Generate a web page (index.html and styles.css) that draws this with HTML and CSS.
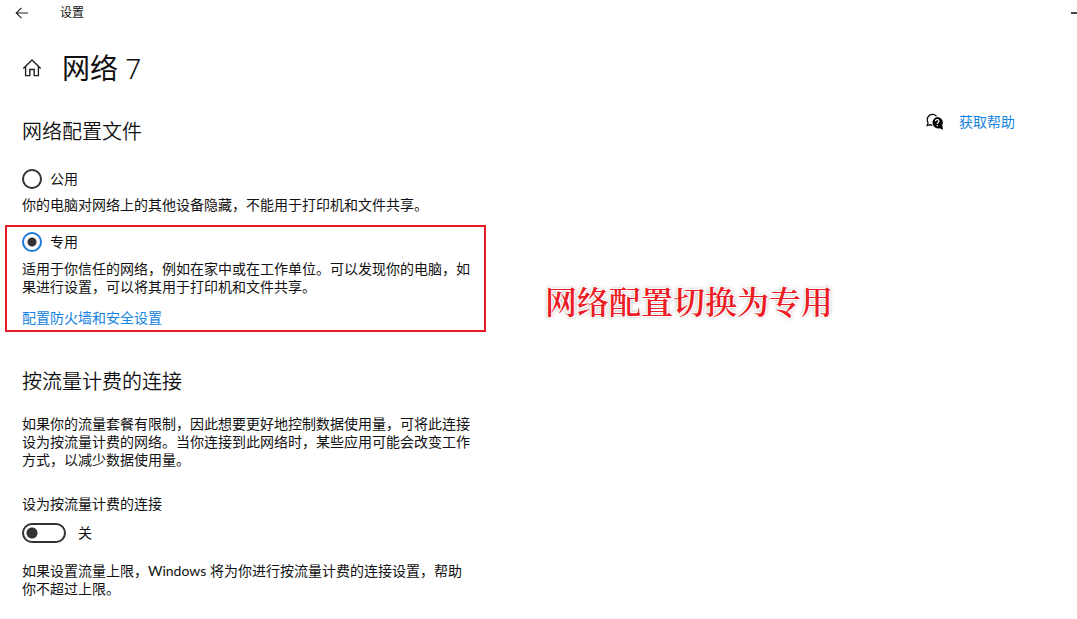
FILE: index.html
```html
<!DOCTYPE html>
<html lang="zh-CN">
<head>
<meta charset="utf-8">
<title>设置</title>
<link rel="stylesheet" href="styles.css">
</head>
<body>
<header class="titlebar">
  <button class="back" type="button" aria-label="返回">
    <svg width="14" height="12" viewBox="0 0 14 12" fill="none" stroke="#222" stroke-width="1.1"><path d="M13 6H1M6.5 .8L1.2 6l5.3 5.2"/></svg>
  </button>
  <span class="app-name">设置</span>
  <button class="minimize" type="button" aria-label="最小化"></button>
</header>
<div class="page-title">
  <svg class="home" width="20" height="20" viewBox="0 0 20 20" fill="none" stroke="#222" stroke-width="1.4"><path d="M1.3 10.4L10 2l8.7 8.4M3.6 8.5v9.1h4.2v-6.1h4.4v6.1h4.2V8.5"/></svg>
  <h1>网络 <span class="thin">7</span></h1>
</div>
<div class="content">
  <main class="settings">
    <section class="profile">
      <h2>网络配置文件</h2>
      <label class="option"><input type="radio" name="profile">公用</label>
      <p class="public-note">你的电脑对网络上的其他设备隐藏，不能用于打印机和文件共享。</p>
      <div class="highlight">
        <label class="option"><input type="radio" name="profile" checked>专用</label>
        <p class="private-note">适用于你信任的网络，例如在家中或在工作单位。可以发现你的电脑，如果进行设置，可以将其用于打印机和文件共享。</p>
        <a class="link" href="#">配置防火墙和安全设置</a>
      </div>
    </section>
    <section class="metered">
      <h2>按流量计费的连接</h2>
      <p class="metered-note">如果你的流量套餐有限制，因此想要更好地控制数据使用量，可将此连接设为按流量计费的网络。当你连接到此网络时，某些应用可能会改变工作方式，以减少数据使用量。</p>
      <label class="toggle-label" for="metered">设为按流量计费的连接</label>
      <div class="toggle-row"><input class="toggle" id="metered" type="checkbox" role="switch"><span>关</span></div>
      <p>如果设置流量上限，Windows 将为你进行按流量计费的连接设置，帮助你不超过上限。</p>
    </section>
  </main>
  <aside class="side">
    <a class="help" href="#">
      <svg width="18" height="18" viewBox="0 0 18 18"><path d="M6.6 1.4a5.3 5.3 0 0 1 5.2 5.3A5.3 5.3 0 0 1 4.2 11.6L1.2 12.6l.9-3A5.3 5.3 0 0 1 6.6 1.4z" fill="#fff" stroke="#000" stroke-width="1.2"/><path d="M11.2 3.9a5.7 5.7 0 0 1 5 8.3l.9 4.5-3.6-1.4A5.8 5.8 0 1 1 11.2 3.9z" stroke="#fff" stroke-width="1.6" paint-order="stroke"/><path d="M9.5 8.2c0-2.2 3.4-2.1 3.4-.1 0 1.4-1.7 1.4-1.7 2.9M11.2 12v1.3" fill="none" stroke="#fff" stroke-width="1.2"/></svg>
      <span>获取帮助</span>
    </a>
    <p class="callout">网络配置切换为专用</p>
  </aside>
</div>
</body>
</html>
```
FILE: styles.css
```css
* { box-sizing: border-box; }
body {
  margin: 0;
  background: #fff;
  color: #111;
  font: 14px/18px Lato, "Noto Sans CJK SC", sans-serif;
}
h1, h2, p { margin: 0; font-weight: 400; }
button { border: 0; padding: 0; background: none; }
input { appearance: none; margin: 0; flex: none; }
a { text-decoration: none; color: #1583e0; }

.titlebar { display: flex; align-items: center; height: 25px; padding-left: 15px; font-size: 12px; }
.back { display: flex; width: 14px; margin-right: 31px; }
.minimize { width: 6px; height: 2px; margin-left: auto; background: #444; }

.page-title { display: flex; align-items: center; gap: 20px; padding: 23px 22px 0; }
.page-title h1 { font-size: 28px; line-height: 40px; }
.thin { font-family: "Noto Sans", sans-serif; font-weight: 300; }

.content { display: grid; grid-template-columns: 481px 1fr; column-gap: 59px; padding: 29px 62px 20px 5px; }
.settings h2 { font-size: 20px; line-height: 28px; font-weight: 350; }
.profile > :not(.highlight), .metered { padding: 0 14px 0 17px; }
.option { display: flex; align-items: center; gap: 8px; line-height: 20px; }
.option input { width: 20px; height: 20px; border: 2px solid #333; border-radius: 50%; }
.option input:checked { border-color: #1a7bd9; background: radial-gradient(circle, #333 4px, transparent 5px); }
.profile > .option { margin-top: 24px; }
.public-note { margin: 7px 0 11px; }
.highlight { padding: 5px 13px 3px 15px; border: 2px solid #e81a24; }
.private-note { margin: 8px 0 13px; }
.link { display: block; }

.metered { margin-top: 35px; }
.metered-note { margin: 20px 0 26px; }
.toggle-label { display: block; }
.toggle-row { display: flex; align-items: center; gap: 12px; margin: 10px 0 19px; }
.toggle { width: 44px; height: 20px; border: 2px solid #333; border-radius: 10px; background: radial-gradient(circle at 8px 8px, #333 5px, transparent 6px); }

.side { display: flex; flex-direction: column; }
.help { display: flex; align-items: center; align-self: flex-end; gap: 15px; margin-top: -4px; }
.callout {
  margin-top: 149px;
  color: #ed1c24;
  font: 600 32px/40px "Noto Serif CJK SC", "Noto Sans CJK SC", serif;
  white-space: nowrap;
  text-shadow: 1px 1px 0 #fff, -1px -1px 0 #fff, 1px -1px 0 #fff, -1px 1px 0 #fff, 0 0 4px #888;
}
```
